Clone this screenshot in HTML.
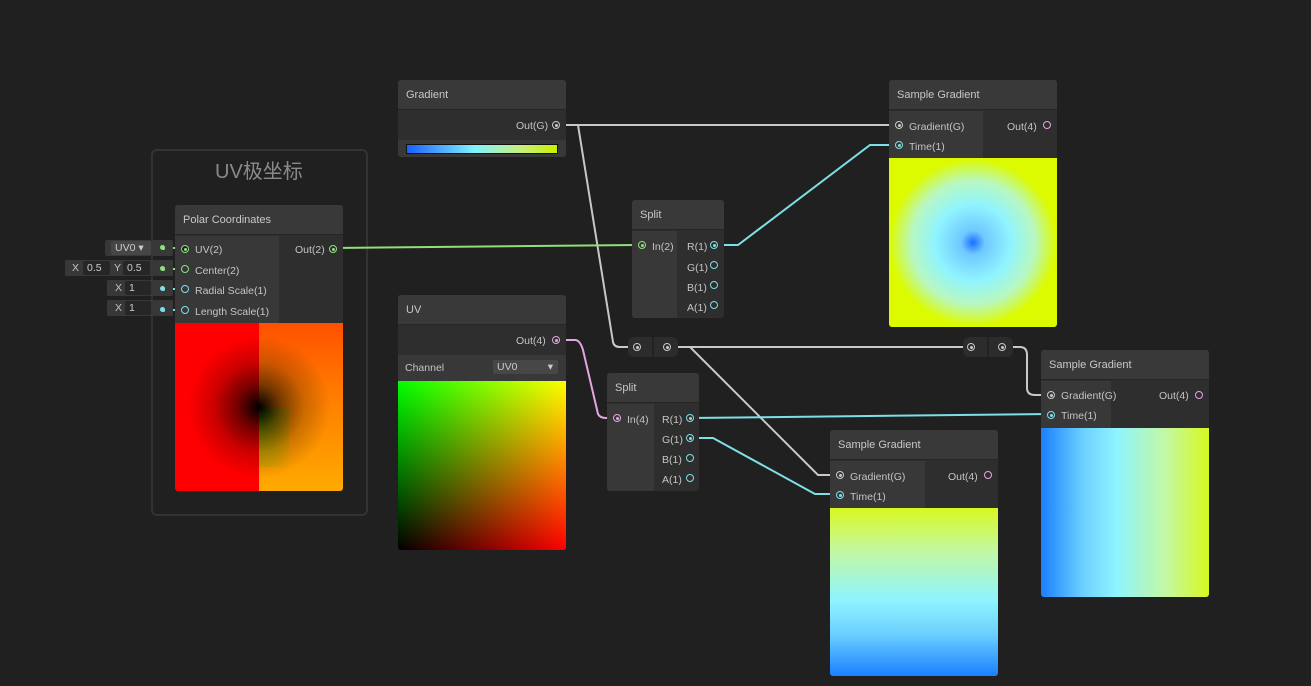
<!DOCTYPE html>
<html><head><meta charset="utf-8"><style>
*{margin:0;padding:0;box-sizing:border-box}
body{width:1311px;height:686px;background:#202020;position:relative;overflow:hidden;font-family:"Liberation Sans","Noto Sans CJK SC",sans-serif;font-size:10.5px;color:#c4c4c4}
.n{position:absolute;background:#2e2e2e;border-radius:3px;overflow:hidden}
.h{position:absolute;left:0;right:0;top:0;height:30px;background:#393939;font-size:11px;padding:9px 0 0 8px;color:#c8c8c8;border-bottom:1px solid #262626}
.lc{position:absolute;background:#383838}
.t{position:absolute;white-space:nowrap}
.p{position:absolute;width:8px;height:8px;border-radius:50%;border:1.3px solid #c8c8c8}
.p.f::after{content:"";position:absolute;left:1.5px;top:1.5px;width:3px;height:3px;border-radius:50%;background:currentColor}
.g{border-color:#8ee07e;color:#8ee07e}.c{border-color:#7ee0e6;color:#7ee0e6}.w{border-color:#c8c8c8;color:#c8c8c8}.k{border-color:#e4a6e2;color:#e4a6e2}
.fld{position:absolute;background:#383838;height:16px;border-radius:2px}
.box{position:absolute;background:#262626;border-radius:2px;height:14px;top:1px;color:#ccc;padding:1px 0 0 4px}
svg{position:absolute;left:0;top:0}
</style></head><body>

<div style="position:absolute;left:151px;top:149px;width:217px;height:367px;border:2px solid #333;border-radius:6px"></div>
<div class="t" style="left:215px;top:155px;font-size:20px;color:#8a8a8a">UV极坐标</div>

<svg width="1311" height="686" fill="none" stroke-width="2">
<path d="M556 125H898" stroke="#c8c8c8"/>
<path d="M556 125H578L613 342Q614 347 620 347H668H971" stroke="#c8c8c8"/>
<path d="M690 347L818 475H840" stroke="#c8c8c8"/>
<path d="M1002 347H1020Q1027 347 1027 355V388Q1027 395 1035 395H1050" stroke="#c8c8c8"/>
<path d="M333 248L641 245" stroke="#8ee07e"/>
<path d="M714 245H738L870 145H898" stroke="#7ee0e6"/>
<path d="M556 340H575Q580 340 583 350L598 414Q600 418 606 418H616" stroke="#e4a6e2"/>
<path d="M690 418L1050 414" stroke="#7ee0e6"/>
<path d="M690 438H713L815 494H840" stroke="#7ee0e6"/>
<path d="M163 248H185M163 269H185" stroke="#8ee07e"/>
<path d="M163 289H185M163 310H185" stroke="#7ee0e6"/>
</svg>

<!-- inputs -->
<div class="fld" style="left:105px;top:240px;width:68px"><div class="box" style="left:6px;width:40px;background:#464646">UV0 ▾</div></div>
<div class="fld" style="left:65px;top:260px;width:108px"><span class="t" style="left:7px;top:2px">X</span><div class="box" style="left:18px;width:27px">0.5</div><span class="t" style="left:49px;top:2px">Y</span><div class="box" style="left:58px;width:27px">0.5</div></div>
<div class="fld" style="left:107px;top:280px;width:66px"><span class="t" style="left:8px;top:2px">X</span><div class="box" style="left:18px;width:26px">1</div></div>
<div class="fld" style="left:107px;top:300px;width:66px"><span class="t" style="left:8px;top:2px">X</span><div class="box" style="left:18px;width:26px">1</div></div>
<div class="p f g" style="left:160px;top:245px;width:5px;height:5px;border:none;background:#8ee07e"></div>
<div class="p f g" style="left:160px;top:266px;width:5px;height:5px;border:none;background:#8ee07e"></div>
<div class="p f c" style="left:160px;top:286px;width:5px;height:5px;border:none;background:#7ee0e6"></div>
<div class="p f c" style="left:160px;top:307px;width:5px;height:5px;border:none;background:#7ee0e6"></div>

<!-- Polar -->
<div class="n" style="left:175px;top:205px;width:168px;height:286px">
<div class="h">Polar Coordinates</div>
<div class="lc" style="left:0;top:31px;width:104px;height:87px"></div>
<div class="p f g" style="left:6px;top:40px;background:#202020"></div><span class="t" style="left:20px;top:39px">UV(2)</span>
<div class="p g" style="left:6px;top:60px"></div><span class="t" style="left:20px;top:60px">Center(2)</span>
<div class="p c" style="left:6px;top:80px"></div><span class="t" style="left:20px;top:80px">Radial Scale(1)</span>
<div class="p c" style="left:6px;top:101px"></div><span class="t" style="left:20px;top:101px">Length Scale(1)</span>
<span class="t" style="left:120px;top:39px">Out(2)</span><div class="p f g" style="left:154px;top:40px"></div>
<div style="position:absolute;left:0;top:118px;width:84px;height:168px;background:#f00"></div>
<div style="position:absolute;left:84px;top:118px;width:84px;height:168px;background:linear-gradient(180deg,#ff5000,#ff7a00 40%,#ffaa00)"></div>
<div style="position:absolute;left:84px;top:202px;width:30px;height:60px;background:radial-gradient(ellipse at 0 0,rgba(60,200,0,.9) 0,rgba(120,180,0,.5) 40%,transparent 100%)"></div>
<div style="position:absolute;left:0;top:118px;width:168px;height:168px;background:radial-gradient(circle at 50% 50%,rgba(0,0,0,1) 0,rgba(0,0,0,.55) 18%,rgba(0,0,0,.2) 38%,transparent 60%)"></div>
</div>

<!-- Gradient -->
<div class="n" style="left:398px;top:80px;width:168px;height:77px">
<div class="h">Gradient</div>
<span class="t" style="left:118px;top:40px">Out(G)</span><div class="p f w" style="left:154px;top:41px"></div>
<div style="position:absolute;left:0;top:60px;width:168px;height:17px;background:#383838"></div>
<div style="position:absolute;left:8px;top:64px;width:152px;height:10px;border:1px solid #111;background:linear-gradient(90deg,#1a60ff,#7ef4ff 45%,#c8f080 75%,#c8f000)"></div>
</div>

<!-- UV -->
<div class="n" style="left:398px;top:295px;width:168px;height:255px">
<div class="h">UV</div>
<span class="t" style="left:118px;top:40px">Out(4)</span><div class="p f k" style="left:154px;top:41px"></div>
<div style="position:absolute;left:0;top:60px;width:168px;height:26px;background:#383838"></div>
<span class="t" style="left:7px;top:67px">Channel</span>
<div class="box" style="left:95px;top:65px;width:65px;background:#474747">UV0<span style="float:right;margin-right:5px">▾</span></div>
<div style="position:absolute;left:0;top:86px;width:168px;height:169px;background:linear-gradient(180deg,#0f0,#000),linear-gradient(90deg,#000,#f00);background-blend-mode:screen"></div>
</div>

<!-- Split1 -->
<div class="n" style="left:632px;top:200px;width:92px;height:118px">
<div class="h">Split</div>
<div class="lc" style="left:0;top:31px;width:45px;height:87px"></div>
<div class="p f g" style="left:6px;top:41px"></div><span class="t" style="left:20px;top:41px">In(2)</span>
<span class="t" style="left:55px;top:41px">R(1)</span><div class="p f c" style="left:78px;top:41px"></div>
<span class="t" style="left:55px;top:62px">G(1)</span><div class="p c" style="left:78px;top:61px"></div>
<span class="t" style="left:55px;top:82px">B(1)</span><div class="p c" style="left:78px;top:81px"></div>
<span class="t" style="left:55px;top:102px">A(1)</span><div class="p c" style="left:78px;top:101px"></div>
</div>

<!-- Split2 -->
<div class="n" style="left:607px;top:373px;width:92px;height:118px">
<div class="h">Split</div>
<div class="lc" style="left:0;top:31px;width:47px;height:87px"></div>
<div class="p f k" style="left:6px;top:41px"></div><span class="t" style="left:20px;top:41px">In(4)</span>
<span class="t" style="left:55px;top:41px">R(1)</span><div class="p f c" style="left:79px;top:41px"></div>
<span class="t" style="left:55px;top:61px">G(1)</span><div class="p f c" style="left:79px;top:61px"></div>
<span class="t" style="left:55px;top:81px">B(1)</span><div class="p c" style="left:79px;top:81px"></div>
<span class="t" style="left:55px;top:101px">A(1)</span><div class="p c" style="left:79px;top:101px"></div>
</div>

<!-- reroutes -->
<div style="position:absolute;left:628px;top:337px;width:50px;height:20px;background:#2c2c2c;border-radius:6px"><div style="position:absolute;left:24px;top:0;width:2px;height:20px;background:#222"></div></div>
<div class="p f w" style="left:633px;top:343px"></div><div class="p f w" style="left:663px;top:343px"></div>
<div style="position:absolute;left:963px;top:337px;width:50px;height:20px;background:#2c2c2c;border-radius:6px"><div style="position:absolute;left:24px;top:0;width:2px;height:20px;background:#222"></div></div>
<div class="p f w" style="left:967px;top:343px"></div><div class="p f w" style="left:998px;top:343px"></div>

<!-- SG1 -->
<div class="n" style="left:889px;top:80px;width:168px;height:247px">
<div class="h">Sample Gradient</div>
<div class="lc" style="left:0;top:31px;width:94px;height:47px"></div>
<div class="p f w" style="left:6px;top:41px"></div><span class="t" style="left:20px;top:41px">Gradient(G)</span>
<div class="p f c" style="left:6px;top:61px"></div><span class="t" style="left:20px;top:61px">Time(1)</span>
<span class="t" style="left:118px;top:41px">Out(4)</span><div class="p k" style="left:154px;top:41px"></div>
<div style="position:absolute;left:0;top:78px;width:168px;height:169px;background:radial-gradient(circle at 50% 50%,#1a70ff 0,#70c8ff 10%,#90f4ff 32%,#b8f8c0 52%,#dcfa00 70%,#dcfa00 100%)"></div>
</div>

<!-- SG2 -->
<div class="n" style="left:1041px;top:350px;width:168px;height:247px">
<div class="h">Sample Gradient</div>
<div class="lc" style="left:0;top:31px;width:70px;height:47px"></div>
<div class="p f w" style="left:6px;top:41px"></div><span class="t" style="left:20px;top:40px">Gradient(G)</span>
<div class="p f c" style="left:6px;top:61px"></div><span class="t" style="left:20px;top:60px">Time(1)</span>
<span class="t" style="left:118px;top:40px">Out(4)</span><div class="p k" style="left:154px;top:41px"></div>
<div style="position:absolute;left:0;top:78px;width:168px;height:169px;background:linear-gradient(90deg,#1a80ff,#6cd0ff 25%,#8ef4ff 45%,#c4f8a0 75%,#d8f820)"></div>
</div>

<!-- SG3 -->
<div class="n" style="left:830px;top:430px;width:168px;height:246px">
<div class="h">Sample Gradient</div>
<div class="lc" style="left:0;top:31px;width:95px;height:47px"></div>
<div class="p f w" style="left:6px;top:41px"></div><span class="t" style="left:20px;top:41px">Gradient(G)</span>
<div class="p f c" style="left:6px;top:61px"></div><span class="t" style="left:20px;top:61px">Time(1)</span>
<span class="t" style="left:118px;top:41px">Out(4)</span><div class="p k" style="left:154px;top:41px"></div>
<div style="position:absolute;left:0;top:78px;width:168px;height:168px;background:linear-gradient(180deg,#d8f820,#c4f8a0 25%,#8ef4ff 55%,#6cd0ff 75%,#1a80ff)"></div>
</div>

</body></html>
